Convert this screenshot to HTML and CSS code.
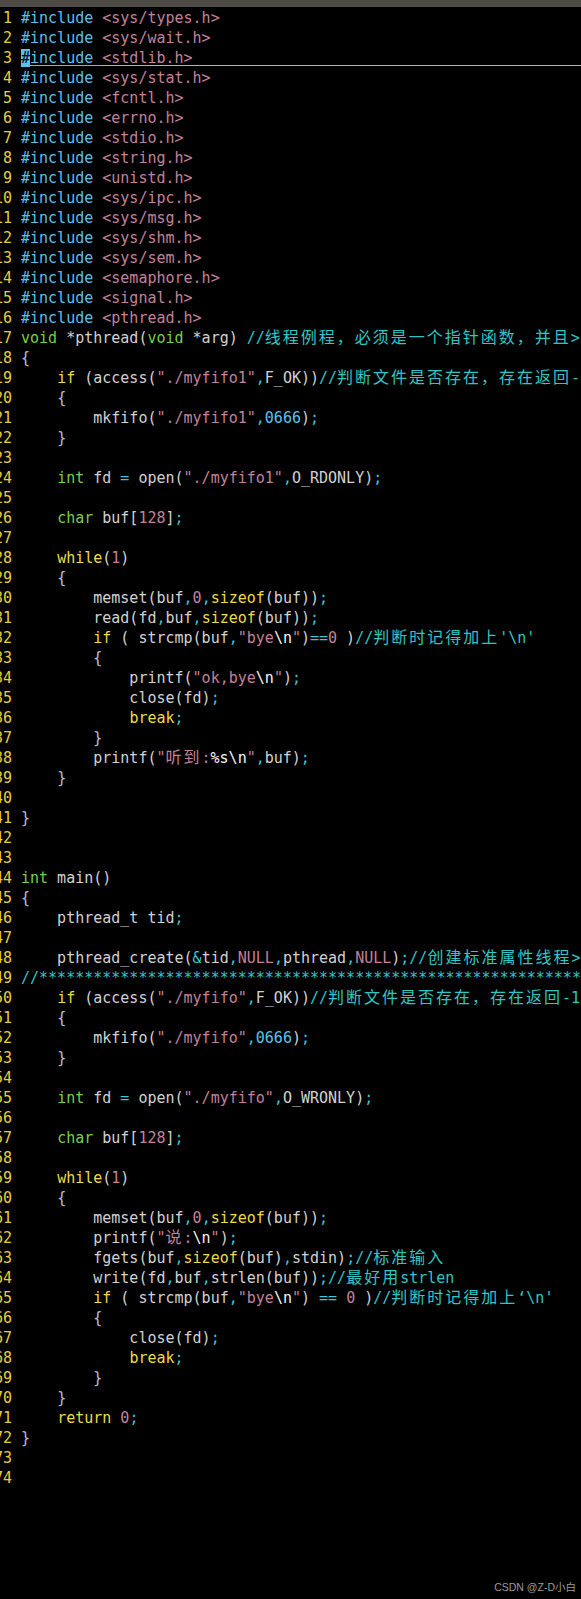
FILE: index.html
```html
<!DOCTYPE html>
<html lang="zh">
   <head>
      <meta charset="utf-8">
      <title>fifo.c - vim</title>
      <link rel="stylesheet" href="styles.css">
   </head>
   <body>
      <div class="screen">
      	<div class="titlebar"></div>

      	<div class="editor">
      		<div class="row"><span class="ln">1</span><span class="code"><span class="p">#include</span> <span class="s">&lt;sys/types.h&gt;</span></span></div>
      		<div class="row"><span class="ln">2</span><span class="code"><span class="p">#include</span> <span class="s">&lt;sys/wait.h&gt;</span></span></div>
      		<div class="row cur"><span class="ln">3</span><span class="code"><span class="cursor">#</span><span class="p">include</span> <span class="s">&lt;stdlib.h&gt;</span></span></div>
      		<div class="row"><span class="ln">4</span><span class="code"><span class="p">#include</span> <span class="s">&lt;sys/stat.h&gt;</span></span></div>
      		<div class="row"><span class="ln">5</span><span class="code"><span class="p">#include</span> <span class="s">&lt;fcntl.h&gt;</span></span></div>
      		<div class="row"><span class="ln">6</span><span class="code"><span class="p">#include</span> <span class="s">&lt;errno.h&gt;</span></span></div>
      		<div class="row"><span class="ln">7</span><span class="code"><span class="p">#include</span> <span class="s">&lt;stdio.h&gt;</span></span></div>
      		<div class="row"><span class="ln">8</span><span class="code"><span class="p">#include</span> <span class="s">&lt;string.h&gt;</span></span></div>
      		<div class="row"><span class="ln">9</span><span class="code"><span class="p">#include</span> <span class="s">&lt;unistd.h&gt;</span></span></div>
      		<div class="row"><span class="ln">10</span><span class="code"><span class="p">#include</span> <span class="s">&lt;sys/ipc.h&gt;</span></span></div>
      		<div class="row"><span class="ln">11</span><span class="code"><span class="p">#include</span> <span class="s">&lt;sys/msg.h&gt;</span></span></div>
      		<div class="row"><span class="ln">12</span><span class="code"><span class="p">#include</span> <span class="s">&lt;sys/shm.h&gt;</span></span></div>
      		<div class="row"><span class="ln">13</span><span class="code"><span class="p">#include</span> <span class="s">&lt;sys/sem.h&gt;</span></span></div>
      		<div class="row"><span class="ln">14</span><span class="code"><span class="p">#include</span> <span class="s">&lt;semaphore.h&gt;</span></span></div>
      		<div class="row"><span class="ln">15</span><span class="code"><span class="p">#include</span> <span class="s">&lt;signal.h&gt;</span></span></div>
      		<div class="row"><span class="ln">16</span><span class="code"><span class="p">#include</span> <span class="s">&lt;pthread.h&gt;</span></span></div>
      		<div class="row"><span class="ln">17</span><span class="code"><span class="t">void</span> *pthread(<span class="t">void</span> *arg) <span class="c">//<span class="z">线程例程，必须是一个指针函数，并且</span>&gt;</span></span></div>
      		<div class="row"><span class="ln">18</span><span class="code"><span class="b">{</span></span></div>
      		<div class="row"><span class="ln">19</span><span class="code">    <span class="k">if</span> (access(<span class="s">"./myfifo1"</span><span class="o">,</span>F_OK))<span class="c">//<span class="z">判断文件是否存在，存在返回</span>-</span></span></div>
      		<div class="row"><span class="ln">20</span><span class="code">    <span class="b">{</span></span></div>
      		<div class="row"><span class="ln">21</span><span class="code">        mkfifo(<span class="s">"./myfifo1"</span><span class="o">,</span><span class="p">0666</span>)<span class="o">;</span></span></div>
      		<div class="row"><span class="ln">22</span><span class="code">    <span class="b">}</span></span></div>
      		<div class="row"><span class="ln">23</span><span class="code"></span></div>
      		<div class="row"><span class="ln">24</span><span class="code">    <span class="t">int</span> fd <span class="o">=</span> open(<span class="s">"./myfifo1"</span><span class="o">,</span>O_RDONLY)<span class="o">;</span></span></div>
      		<div class="row"><span class="ln">25</span><span class="code"></span></div>
      		<div class="row"><span class="ln">26</span><span class="code">    <span class="t">char</span> buf[<span class="s">128</span>]<span class="o">;</span></span></div>
      		<div class="row"><span class="ln">27</span><span class="code"></span></div>
      		<div class="row"><span class="ln">28</span><span class="code">    <span class="k">while</span>(<span class="s">1</span>)</span></div>
      		<div class="row"><span class="ln">29</span><span class="code">    <span class="b">{</span></span></div>
      		<div class="row"><span class="ln">30</span><span class="code">        memset(buf<span class="o">,</span><span class="s">0</span><span class="o">,</span><span class="k">sizeof</span>(buf))<span class="o">;</span></span></div>
      		<div class="row"><span class="ln">31</span><span class="code">        read(fd<span class="o">,</span>buf<span class="o">,</span><span class="k">sizeof</span>(buf))<span class="o">;</span></span></div>
      		<div class="row"><span class="ln">32</span><span class="code">        <span class="k">if</span> ( strcmp(buf<span class="o">,</span><span class="s">"bye<span class="e">\n</span>"</span>)<span class="o">==</span><span class="s">0</span> )<span class="c">//<span class="z">判断时记得加上</span>'\n'</span></span></div>
      		<div class="row"><span class="ln">33</span><span class="code">        <span class="b">{</span></span></div>
      		<div class="row"><span class="ln">34</span><span class="code">            printf(<span class="s">"ok,bye<span class="e">\n</span>"</span>)<span class="o">;</span></span></div>
      		<div class="row"><span class="ln">35</span><span class="code">            close(fd)<span class="o">;</span></span></div>
      		<div class="row"><span class="ln">36</span><span class="code">            <span class="k">break</span><span class="o">;</span></span></div>
      		<div class="row"><span class="ln">37</span><span class="code">        <span class="b">}</span></span></div>
      		<div class="row"><span class="ln">38</span><span class="code">        printf(<span class="s">"<span class="z">听到</span>:<span class="e">%s\n</span>"</span><span class="o">,</span>buf)<span class="o">;</span></span></div>
      		<div class="row"><span class="ln">39</span><span class="code">    <span class="b">}</span></span></div>
      		<div class="row"><span class="ln">40</span><span class="code"></span></div>
      		<div class="row"><span class="ln">41</span><span class="code"><span class="b">}</span></span></div>
      		<div class="row"><span class="ln">42</span><span class="code"></span></div>
      		<div class="row"><span class="ln">43</span><span class="code"></span></div>
      		<div class="row"><span class="ln">44</span><span class="code"><span class="t">int</span> main()</span></div>
      		<div class="row"><span class="ln">45</span><span class="code"><span class="b">{</span></span></div>
      		<div class="row"><span class="ln">46</span><span class="code">    pthread_t tid<span class="o">;</span></span></div>
      		<div class="row"><span class="ln">47</span><span class="code"></span></div>
      		<div class="row"><span class="ln">48</span><span class="code">    pthread_create(<span class="o">&amp;</span>tid<span class="o">,</span><span class="s">NULL</span><span class="o">,</span>pthread<span class="o">,</span><span class="s">NULL</span>)<span class="o">;</span><span class="c">//<span class="z">创建标准属性线程</span>&gt;</span></span></div>
      		<div class="row"><span class="ln">49</span><span class="code"><span class="c">//************************************************************************</span></span></div>
      		<div class="row"><span class="ln">50</span><span class="code">    <span class="k">if</span> (access(<span class="s">"./myfifo"</span><span class="o">,</span>F_OK))<span class="c">//<span class="z">判断文件是否存在，存在返回</span>-1</span></span></div>
      		<div class="row"><span class="ln">51</span><span class="code">    <span class="b">{</span></span></div>
      		<div class="row"><span class="ln">52</span><span class="code">        mkfifo(<span class="s">"./myfifo"</span><span class="o">,</span><span class="p">0666</span>)<span class="o">;</span></span></div>
      		<div class="row"><span class="ln">53</span><span class="code">    <span class="b">}</span></span></div>
      		<div class="row"><span class="ln">54</span><span class="code"></span></div>
      		<div class="row"><span class="ln">55</span><span class="code">    <span class="t">int</span> fd <span class="o">=</span> open(<span class="s">"./myfifo"</span><span class="o">,</span>O_WRONLY)<span class="o">;</span></span></div>
      		<div class="row"><span class="ln">56</span><span class="code"></span></div>
      		<div class="row"><span class="ln">57</span><span class="code">    <span class="t">char</span> buf[<span class="s">128</span>]<span class="o">;</span></span></div>
      		<div class="row"><span class="ln">58</span><span class="code"></span></div>
      		<div class="row"><span class="ln">59</span><span class="code">    <span class="k">while</span>(<span class="s">1</span>)</span></div>
      		<div class="row"><span class="ln">60</span><span class="code">    <span class="b">{</span></span></div>
      		<div class="row"><span class="ln">61</span><span class="code">        memset(buf<span class="o">,</span><span class="s">0</span><span class="o">,</span><span class="k">sizeof</span>(buf))<span class="o">;</span></span></div>
      		<div class="row"><span class="ln">62</span><span class="code">        printf(<span class="s">"<span class="z">说</span>:<span class="e">\n</span>"</span>)<span class="o">;</span></span></div>
      		<div class="row"><span class="ln">63</span><span class="code">        fgets(buf<span class="o">,</span><span class="k">sizeof</span>(buf)<span class="o">,</span>stdin)<span class="o">;</span><span class="c">//<span class="z">标准输入</span></span></span></div>
      		<div class="row"><span class="ln">64</span><span class="code">        write(fd<span class="o">,</span>buf<span class="o">,</span>strlen(buf))<span class="o">;</span><span class="c">//<span class="z">最好用</span>strlen</span></span></div>
      		<div class="row"><span class="ln">65</span><span class="code">        <span class="k">if</span> ( strcmp(buf<span class="o">,</span><span class="s">"bye<span class="e">\n</span>"</span>) <span class="o">==</span> <span class="s">0</span> )<span class="c">//<span class="z">判断时记得加上</span>‘\n'</span></span></div>
      		<div class="row"><span class="ln">66</span><span class="code">        <span class="b">{</span></span></div>
      		<div class="row"><span class="ln">67</span><span class="code">            close(fd)<span class="o">;</span></span></div>
      		<div class="row"><span class="ln">68</span><span class="code">            <span class="k">break</span><span class="o">;</span></span></div>
      		<div class="row"><span class="ln">69</span><span class="code">        <span class="b">}</span></span></div>
      		<div class="row"><span class="ln">70</span><span class="code">    <span class="b">}</span></span></div>
      		<div class="row"><span class="ln">71</span><span class="code">    <span class="k">return</span> <span class="s">0</span><span class="o">;</span></span></div>
      		<div class="row"><span class="ln">72</span><span class="code"><span class="b">}</span></span></div>
      		<div class="row"><span class="ln">73</span><span class="code"></span></div>
      		<div class="row"><span class="ln">74</span><span class="code"></span></div>
      	</div>

      	<div class="mark">CSDN @Z-D小白</div>
      </div>
   </body>
</html>
```

FILE: styles.css
```css
body{
	margin:0;
	padding:0;
	background:#000;
	overflow:hidden;
}
.screen{
	min-height:100vh;
	display:flex;
	flex-direction:column;
}
.titlebar{
	height:7px;
	background:#4e4b46;
	flex:none;
}
.editor{
	padding-top:1px;
	margin-left:-6px;
	font-family:"DejaVu Sans Mono", monospace;
	font-size:15px;
	line-height:20px;
	color:#d2d2d2;
}
.row{
	display:flex;
	height:20px;
	white-space:pre;
}
.ln{
	flex:none;
	width:18px;
	margin-right:9px;
	text-align:right;
	color:#e6cf3c;
}
.code{
	flex:1;
	overflow:hidden;
}
/* cursor line: underline runs to the right edge */
.cur .code{
	background:
		linear-gradient(#5cc0ec,#5cc0ec) no-repeat 9px calc(100% - 2px) / 72px 1px,
		linear-gradient(#b4b4b4,#b4b4b4) no-repeat 0 calc(100% - 2px) / 100% 1px;
}
.cursor{
	background:#5cc0ec;
	color:#000;
}
.p{ color:#5cc0ec; }
.s{ color:#c3829a; }
.t{ color:#76d04c; }
.k{ color:#eedb4a; }
.c{ color:#30c6c6; }
.o{ color:#3cc6d6; }
.b{ color:#b8c0d8; }
.e{ color:#f4f4f4; }
.z{
	font-family:"Noto Sans CJK SC", sans-serif;
	font-size:16px;
	line-height:15px;
	letter-spacing:2px;
}
.mark{
	margin-top:auto;
	align-self:flex-end;
	padding:0 5px 5px 0;
	font-family:"Liberation Sans", "Noto Sans CJK SC", sans-serif;
	font-size:10.5px;
	color:#9c9c9c;
}
```
